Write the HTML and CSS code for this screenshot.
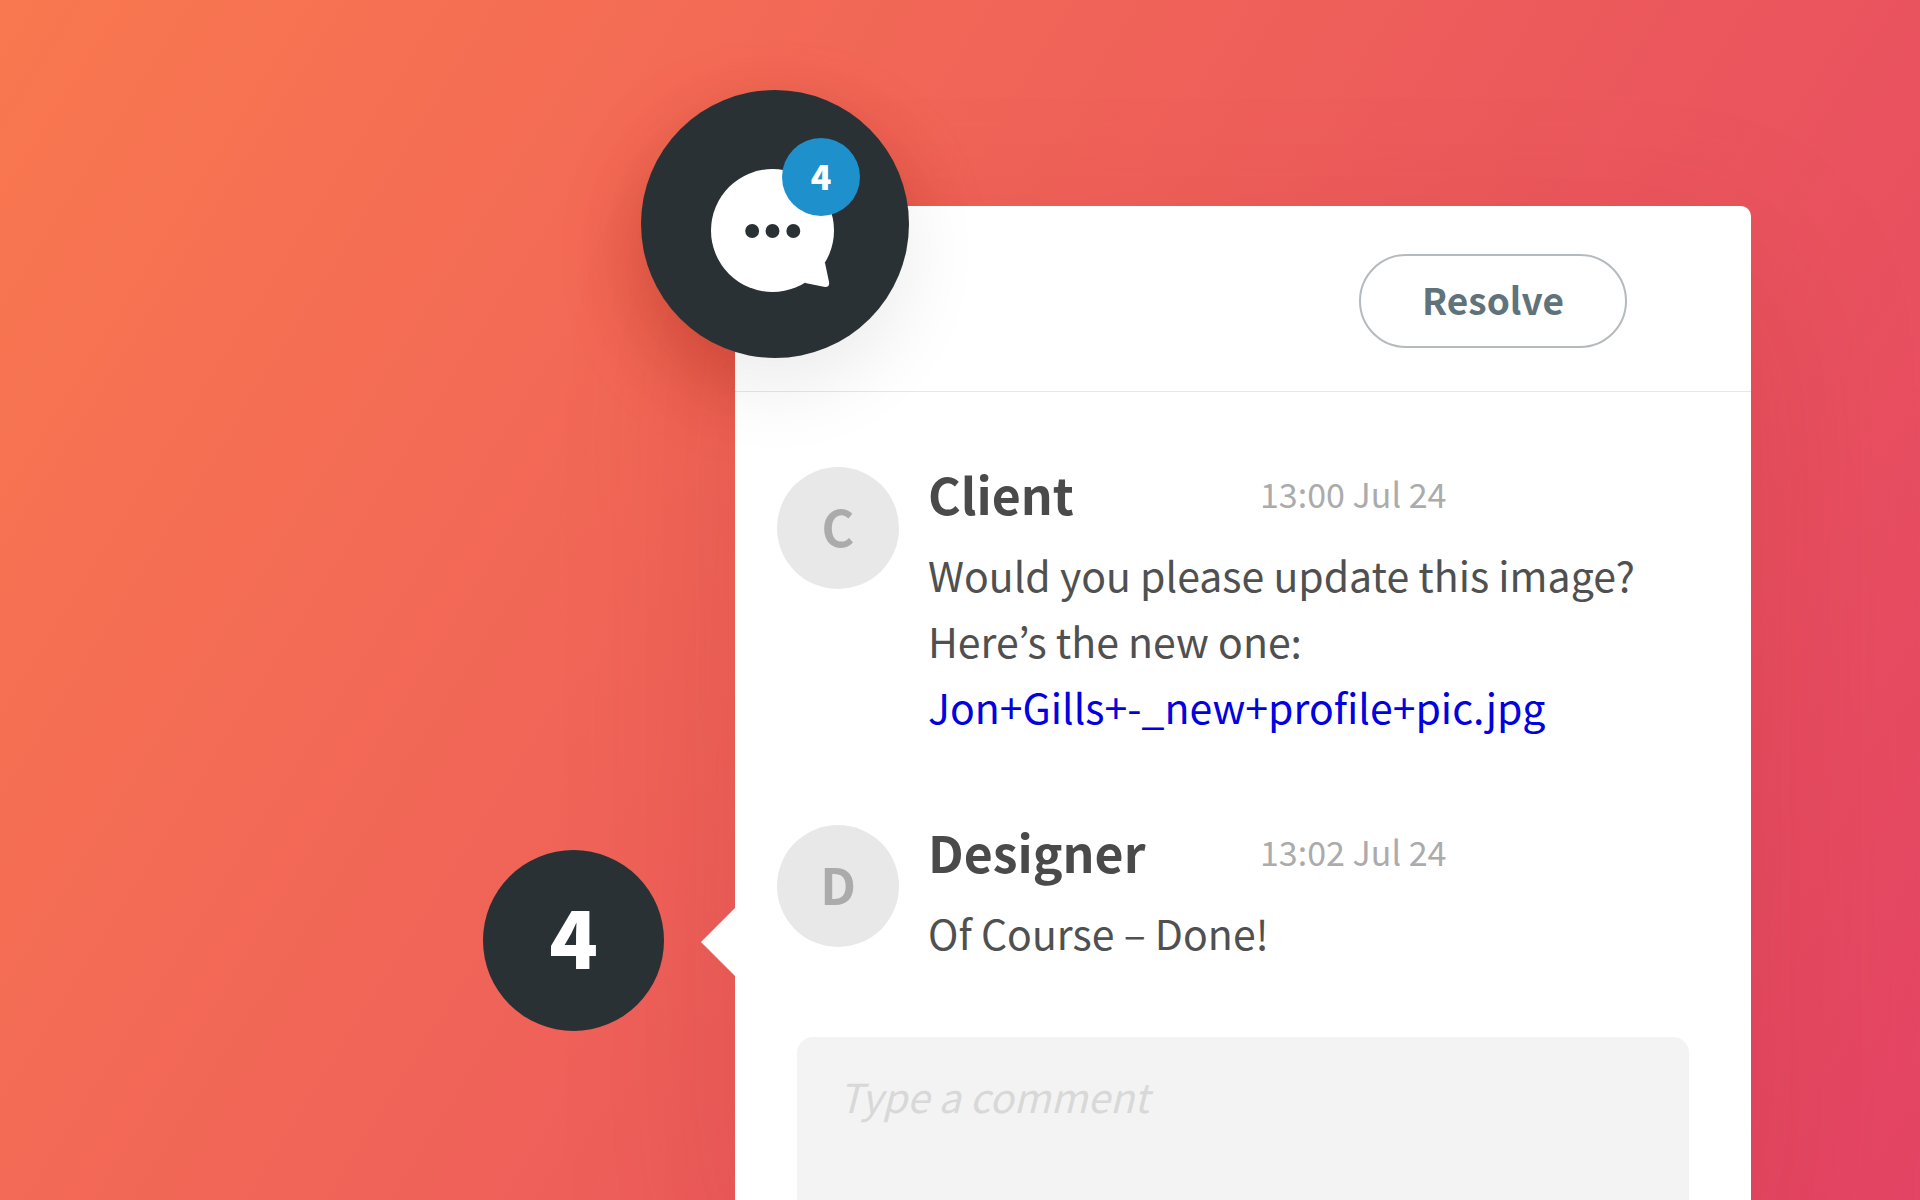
FILE: index.html
```html
<!DOCTYPE html>
<html lang="en">
    <head>
        <meta charset="utf-8">
        <title>Comments</title>
        <link rel="stylesheet" href="styles.css">
    </head>
    <body>
        <main class="card">
            <div class="pin">4</div>
            <div class="launcher">
                <svg class="bubble" viewBox="0 0 124 124" aria-hidden="true">
                    <circle cx="62" cy="62" r="62" fill="#fff"/>
                    <path d="M95 115 L115 119 Q120 119 119 114 L115 95 L100 90 Z" fill="#fff"/>
                    <circle cx="41.5" cy="62.5" r="7" fill="#2a3134"/>
                    <circle cx="62" cy="62.5" r="7" fill="#2a3134"/>
                    <circle cx="83" cy="62.5" r="7" fill="#2a3134"/>
                </svg>
                <span class="badge">4</span>
            </div>
            <header class="card-header">
                <button class="resolve" type="button">Resolve</button>
            </header>
            <section class="comments">
                <article class="comment">
                    <div class="avatar">C</div>
                    <div>
                        <div class="meta">
                            <h2 class="name">Client</h2>
                            <time class="date">13:00 Jul 24</time>
                        </div>
                        <p class="text">Would you please update this image?<br>Here’s the new one:<br><a class="file" href="#">Jon+Gills+-_new+profile+pic.jpg</a></p>
                    </div>
                </article>
                <article class="comment">
                    <div class="avatar">D</div>
                    <div>
                        <div class="meta">
                            <h2 class="name">Designer</h2>
                            <time class="date">13:02 Jul 24</time>
                        </div>
                        <p class="text">Of Course – Done!</p>
                    </div>
                </article>
            </section>
            <textarea class="reply" aria-label="Comment" placeholder="Type a comment"></textarea>
        </main>
    </body>
</html>
```
FILE: styles.css
```css
* {
    box-sizing: border-box;
}
body {
    display: grid;
    /* empty space, card, empty space */
    grid-template-columns: 735fr 1016fr 169fr;
    min-height: 100vh;
    margin: 0;
    padding-top: 206px;
    font-family: "Noto Sans CJK KR", "Open Sans", sans-serif;
    background: linear-gradient(122deg, #f9784f 0%, #f16657 36%, #e44464 100%);
}
.card {
    grid-column: 2;
    position: relative;
    display: flex;
    flex-direction: column;
    background: #fff;
    border-radius: 10px 10px 0 0;
    box-shadow: 0 60px 180px rgba(140, 20, 20, 0.15);
}
/* little arrow that points at the pin */
.card::before {
    content: "";
    position: absolute;
    left: -34px;
    top: 702px;
    border: 34px solid transparent;
    border-left: 0;
    border-right-color: #fff;
}
/* red glow of the round button, it stays behind the card */
.card::after {
    content: "";
    position: absolute;
    z-index: -1;
    left: -94px;
    top: -116px;
    width: 268px;
    height: 268px;
    border-radius: 50%;
    box-shadow: 0 30px 80px rgba(190, 30, 10, 0.3);
}
.pin {
    position: absolute;
    left: -252px;
    top: 644px;
    width: 181px;
    height: 181px;
    border-radius: 50%;
    background: #2a3134;
    color: #fff;
    font-size: 80px;
    font-weight: 900;
    line-height: 169px;
    text-align: center;
}
.launcher {
    position: absolute;
    left: -94px;
    top: -116px;
    width: 268px;
    height: 268px;
    border-radius: 50%;
    background: #2a3134;
    box-shadow: 0 30px 80px rgba(0, 0, 0, 0.08);
}
.bubble {
    position: absolute;
    left: 70px;
    top: 79px;
    width: 123px;
    height: 123px;
    overflow: visible;
}
.badge {
    position: absolute;
    left: 141px;
    top: 48px;
    width: 78px;
    height: 78px;
    border-radius: 50%;
    background: #1e90cc;
    color: #fff;
    font-size: 34px;
    font-weight: 900;
    line-height: 75px;
    text-align: center;
}
.card-header {
    display: flex;
    justify-content: flex-end;
    padding: 48px 124px 43px 0;
    border-bottom: 1px solid #e6e8e8;
}
.resolve {
    width: 268px;
    height: 94px;
    padding: 0 0 4px;
    border: 2px solid #b4babd;
    border-radius: 47px;
    background: none;
    color: #61737a;
    font-family: inherit;
    font-size: 37px;
    font-weight: 700;
}
.comments {
    display: flex;
    flex-direction: column;
    gap: 86px;
    padding: 75px 42px 72px;
}
.comment {
    display: flex;
    gap: 29px;
}
.avatar {
    flex: none;
    width: 122px;
    height: 122px;
    border-radius: 50%;
    background: #e8e8e8;
    color: #ababab;
    font-size: 50px;
    font-weight: 700;
    line-height: 117px;
    text-align: center;
}
.meta {
    display: flex;
    margin-bottom: 20px;
}
.name {
    width: 332px;
    margin: 0;
    color: #4a4a4a;
    font-size: 50px;
    font-weight: 700;
    line-height: 52px;
}
.date {
    color: #ababab;
    font-size: 34px;
    line-height: 54px;
}
.text {
    margin: 0;
    color: #505050;
    font-size: 41px;
    line-height: 66px;
}
.file {
    color: #0000e0;
    text-decoration: none;
}
.reply {
    flex: 1;
    min-height: 163px;
    margin: 0 62px;
    padding: 26px 42px;
    border: 0;
    border-radius: 16px 16px 0 0;
    background: #f3f3f3;
    color: #505050;
    font-family: inherit;
    font-size: 40px;
    line-height: 66px;
    resize: none;
}
.reply::placeholder {
    color: #d8d8d8;
    font-style: italic;
}
```
